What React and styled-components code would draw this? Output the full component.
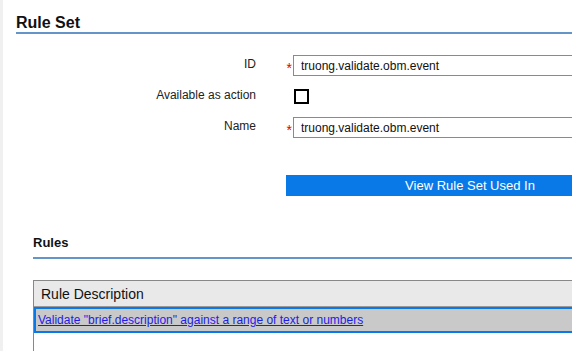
import React from "react";
import styled, { createGlobalStyle } from "styled-components";

const Global = createGlobalStyle`
  html, body {
    margin: 0;
    padding: 0;
    overflow: hidden;
    background: #fff;
  }
  body {
    font-family: "Liberation Sans", Arial, sans-serif;
    color: #222;
  }
`

const Page = styled.div`
  display: flex;
  width: 572px;
  height: 351px;
  overflow: hidden;
`

const Strip = styled.div`
  width: 3px;
  flex: none;
  background: #f0f0f0;
`

const Main = styled.div`
  flex: 1;
  padding-left: 13px;
  min-width: 0;
`

const Heading = styled.div`
  font-weight: bold;
  font-size: ${p => p.size || 16}px;
  color: #111;
  padding-top: ${p => p.top}px;
  padding-bottom: ${p => p.gap}px;
  border-bottom: 2px solid #6495c8;
  line-height: 16px;
`

const Form = styled.div`
  display: grid;
  grid-template-columns: 240px 37px 400px;
  grid-auto-rows: 31px;
  align-items: center;
  margin-top: 16px;
`

const Label = styled.div`
  text-align: right;
  font-size: 12px;
  color: #222;
  margin-top: -3px;
`

const Req = styled.div`
  text-align: right;
  color: #e00000;
  font-size: 14px;
  padding-right: 1px;
  padding-top: 4px;
`

const Input = styled.div`
  height: 19px;
  border: 1px solid #8a8a8a;
  box-sizing: content-box;
  display: flex;
  align-items: center;
  padding-left: 7px;
  font-size: 12px;
  color: #111;
`

const Box = styled.div`
  width: 11px;
  height: 11px;
  border: 2px solid #000;
  margin-left: 1px;
`

const Button = styled.div`
  margin: 32px 0 0 270px;
  width: 368px;
  height: 21px;
  background: #0a79e8;
  color: #fff;
  font-size: 13px;
  display: flex;
  align-items: center;
  justify-content: center;
`

const Rules = styled.div`
  padding-left: 17px;
`

const Table = styled.div`
  margin-top: 21px;
  border-left: 1px solid #888;
  border-top: 1px solid #888;
  height: 100px;
`

const HeadCell = styled.div`
  background: #e9e9e9;
  height: 25px;
  display: flex;
  align-items: center;
  padding-left: 7px;
  font-size: 14px;
  color: #111;
  border-bottom: 1px solid #999;
`

const Row = styled.div`
  background: #c9c9c9;
  height: 22px;
  border: 2px solid #0a79e8;
  border-right: none;
  display: flex;
  align-items: center;
  padding-left: 2px;
`

const RowLink = styled.a`
  color: #1c1ce6;
  text-decoration: underline;
  font-size: 12px;
  white-space: nowrap;
`

export default function App() {
  return (
    <>
      <Global />
      <Page>
        <Strip />
        <Main>
          <Heading top={15} gap={1}>Rule Set</Heading>
          <Form>
            <Label>ID</Label>
            <Req>*</Req>
            <Input>truong.validate.obm.event</Input>
            <Label>Available as action</Label>
            <div />
            <Box />
            <Label>Name</Label>
            <Req>*</Req>
            <Input>truong.validate.obm.event</Input>
          </Form>
          <Button>View Rule Set Used In</Button>
          <Rules>
            <Heading size={13} top={39} gap={6}>Rules</Heading>
            <Table>
              <HeadCell>Rule Description</HeadCell>
              <Row>
                <RowLink href="#">Validate "brief.description" against a range of text or numbers</RowLink>
              </Row>
            </Table>
          </Rules>
        </Main>
      </Page>
    </>
  );
}
